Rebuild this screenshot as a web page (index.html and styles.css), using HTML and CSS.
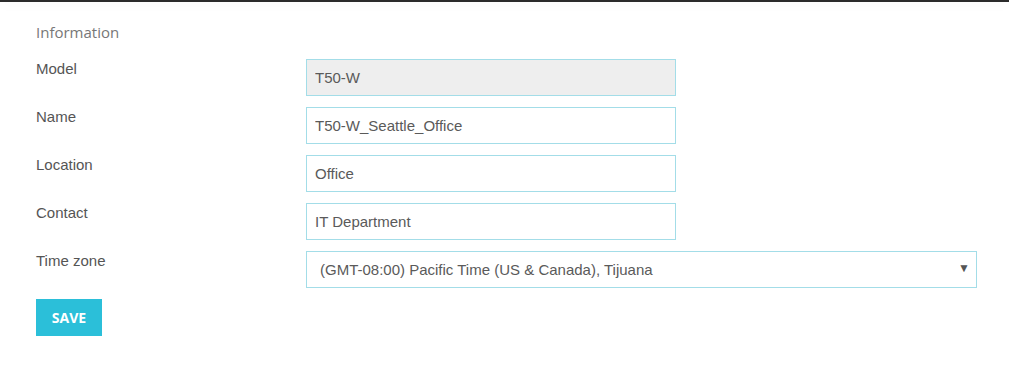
FILE: index.html
```html
<!DOCTYPE html>
<html lang="en">
<head>
  <meta charset="UTF-8" />
  <meta name="viewport" content="width=device-width, initial-scale=1.0" />
  <title>Information</title>
  <link rel="stylesheet" href="styles.css">
</head>
<body>
  <div class="topbar"></div>

  <form class="info-form" onsubmit="return false">
    <h2 class="section-title">Information</h2>

    <div class="row">
      <label for="model">Model</label>
      <input id="model" class="field readonly" type="text" value="T50-W" readonly>
    </div>

    <div class="row">
      <label for="name">Name</label>
      <input id="name" class="field" type="text" value="T50-W_Seattle_Office">
    </div>

    <div class="row">
      <label for="location">Location</label>
      <input id="location" class="field" type="text" value="Office">
    </div>

    <div class="row">
      <label for="contact">Contact</label>
      <input id="contact" class="field" type="text" value="IT Department">
    </div>

    <div class="row">
      <label for="tz">Time zone</label>
      <div class="select-wrap">
        <select id="tz" class="field select">
          <option>(GMT-08:00) Pacific Time (US &amp; Canada), Tijuana</option>
        </select>
        <span class="arrow">&#9660;</span>
      </div>
    </div>

    <button class="save" type="submit">SAVE</button>
  </form>
</body>
</html>
```

FILE: styles.css
```css
body {
  margin: 0;
  background: #fff;
  font-family: "Liberation Sans", Arial, sans-serif;
  color: #555;
}
.topbar {
  height: 2px;
  background: #2b2b2b;
  box-shadow: 0 2px 12px rgba(0, 0, 0, 0.07);
}
.info-form {
  padding: 20px 36px 0 36px;
}
.section-title {
  margin: 0 0 17px 0;
  font-family: "Open Sans", sans-serif;
  font-weight: normal;
  font-size: 15px;
  color: #777;
}
.row {
  display: flex;
  align-items: flex-start;
  margin-bottom: 11px;
}
.row label {
  width: 270px;
  flex: none;
  padding-top: 1px;
  font-size: 15px;
  color: #555;
}
.field {
  box-sizing: border-box;
  width: 370px;
  height: 37px;
  padding: 0 8px;
  border: 1px solid #a3dde8;
  border-radius: 0;
  background: #fff;
  font-family: "Liberation Sans", Arial, sans-serif;
  font-size: 15px;
  color: #5a5a5a;
  outline: none;
}
.field.readonly {
  background: #eeeeee;
}
.select-wrap {
  position: relative;
}
.select {
  width: 671px;
  padding-left: 13px;
  appearance: none;
  -webkit-appearance: none;
}
.arrow {
  position: absolute;
  right: 7px;
  top: 10px;
  font-size: 12px;
  color: #555;
  pointer-events: none;
}
.save {
  display: block;
  width: 66px;
  height: 37px;
  padding: 0;
  border: none;
  background: #2bbfd9;
  color: #fff;
  font-family: "Open Sans", sans-serif;
  font-weight: bold;
  font-size: 14px;
  cursor: pointer;
}
```
